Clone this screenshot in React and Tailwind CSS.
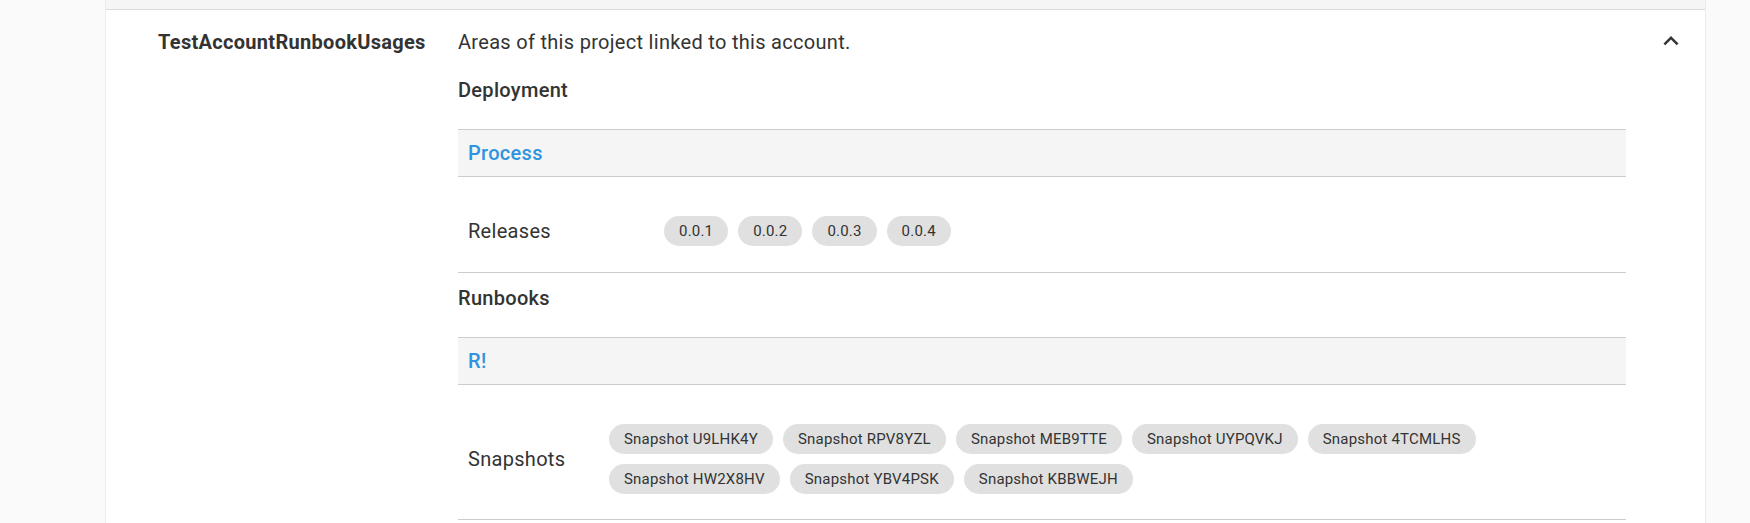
import React from "react";

const releases = ["0.0.1", "0.0.2", "0.0.3", "0.0.4"];
const snapshots = [
    "Snapshot U9LHK4Y",
    "Snapshot RPV8YZL",
    "Snapshot MEB9TTE",
    "Snapshot UYPQVKJ",
    "Snapshot 4TCMLHS",
    "Snapshot HW2X8HV",
    "Snapshot YBV4PSK",
    "Snapshot KBBWEJH",
];

const Chip = ({ label }) => (
    <span className="h-[30px] px-[15px] rounded-full bg-[#e0e0e0] text-[15px] leading-[30px] tracking-[0.2px] text-[#333]">
        {label}
    </span>
);

const UsageGroup = ({ name, rowLabel, labelWidth, items, bottomPad }) => (
    <div>
        <div className="border-y border-[#cccccc] bg-[#f5f5f5] px-[10px] py-[9px] text-[20px] leading-[28px] tracking-[0.3px] font-medium text-[#2f93e0]">
            {name}
        </div>
        <div className={`flex items-center border-b border-[#cccccc] pt-[39px] ${bottomPad}`}>
            <div className={`${labelWidth} shrink-0 pl-[10px] text-[20px] leading-[28px] tracking-[0.3px] text-[#333]`}>{rowLabel}</div>
            <div className="flex flex-wrap gap-[10px]">
                {items.map((item) => (
                    <Chip key={item} label={item} />
                ))}
            </div>
        </div>
    </div>
);

const App = () => {
    return (
        <div className="flex h-[523px] w-full overflow-hidden bg-[#fafafa] font-['Roboto',sans-serif]">
            <div className="w-[105px] shrink-0"></div>

            <div className="flex-1 bg-white border-x border-[#ececec]">
                <div className="h-[10px] bg-[#f5f5f5] border-b border-[#dcdcdc]"></div>

                <div className="flex pt-[18px]">
                    <div className="w-[352px] shrink-0 pl-[52px] text-[20px] leading-[28px] tracking-[0.3px] font-bold text-[#333]">
                        TestAccountRunbookUsages
                    </div>

                    <div className="w-[1168px] shrink-0">
                        <div className="text-[20px] leading-[28px] tracking-[0.3px] text-[#333]">
                            Areas of this project linked to this account.
                        </div>

                        <div className="mt-[20px] mb-[25px] text-[20px] leading-[28px] tracking-[0.3px] font-medium text-[#333]">
                            Deployment
                        </div>
                        <UsageGroup name="Process" rowLabel="Releases" labelWidth="w-[206px]" items={releases} bottomPad="pb-[26px]" />

                        <div className="mt-[11px] mb-[25px] text-[20px] leading-[28px] tracking-[0.3px] font-medium text-[#333]">
                            Runbooks
                        </div>
                        <UsageGroup name="R!" rowLabel="Snapshots" labelWidth="w-[151px]" items={snapshots} bottomPad="pb-[25px]" />
                    </div>

                    <div className="flex-1 flex justify-end pr-[19px]">
                        <svg viewBox="0 0 24 24" className="w-[30px] h-[30px] -mt-[2px] fill-[#333]">
                            <path d="M12 8l-6 6 1.41 1.41L12 10.83l4.59 4.58L18 14z" />
                        </svg>
                    </div>
                </div>
            </div>

            <div className="w-[44px] shrink-0"></div>
        </div>
    );
};

export default App;
